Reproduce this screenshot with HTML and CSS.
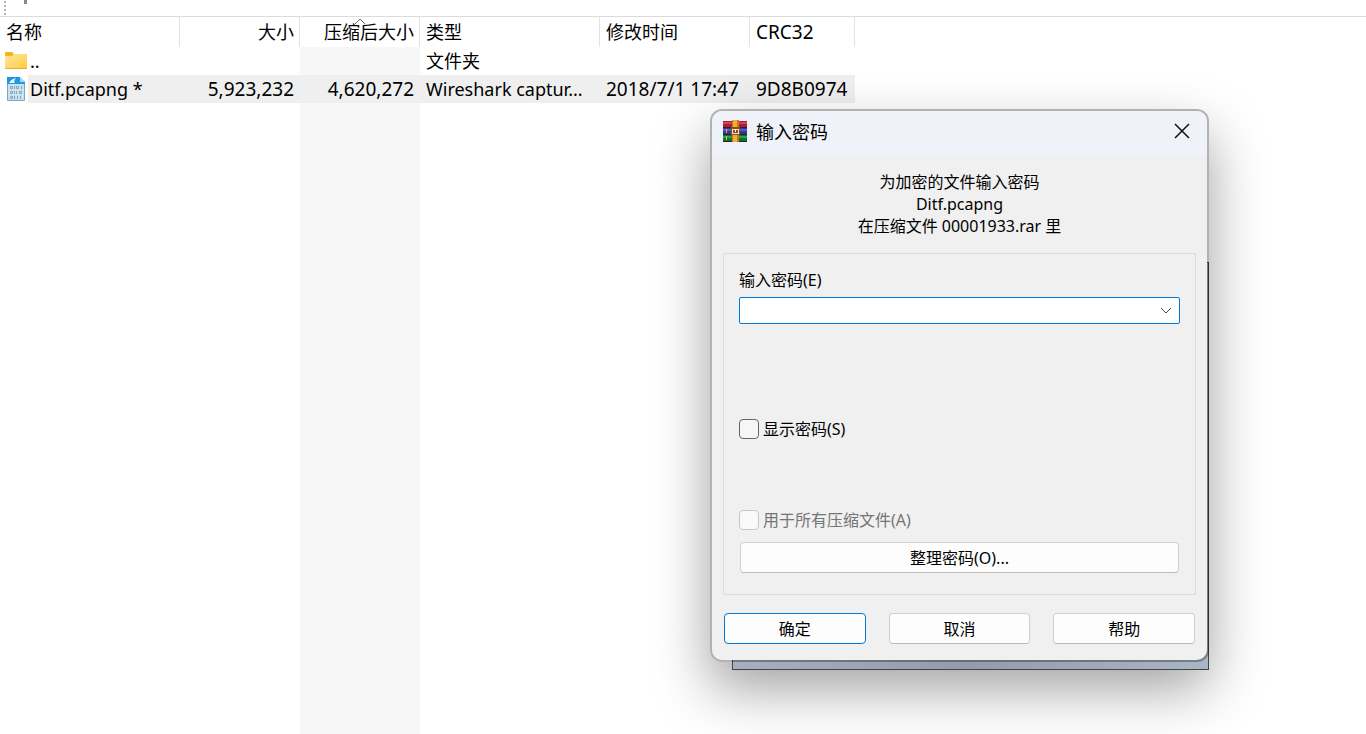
FILE: index.html
```
<!DOCTYPE html>
<html lang="zh-CN">
<head>
  <meta charset="UTF-8" />
  <title>00001933.rar</title>
  <link rel="stylesheet" href="styles.css">
</head>
<body>

  <div class="toolbar">
    <span class="grip"></span>
    <span class="handle"></span>
  </div>

  <table class="files">
    <colgroup>
      <col class="col-name">
      <col class="col-size">
      <col class="col-packed">
      <col class="col-type">
      <col class="col-time">
      <col class="col-crc">
    </colgroup>
    <thead>
      <tr>
        <th>名称</th>
        <th class="num">大小</th>
        <th class="num sorted">压缩后大小
          <svg class="sort" width="12" height="7" viewBox="0 0 12 7"><path d="M1 6 L6 1 L11 6" fill="none" stroke="#666" /></svg>
        </th>
        <th>类型</th>
        <th>修改时间</th>
        <th class="data">CRC32</th>
      </tr>
    </thead>
    <tbody>
      <tr>
        <td class="name">
          <div class="entry">
            <svg class="icon" width="24" height="24" viewBox="0 0 24 24">
              <defs>
                <linearGradient id="folder" x1="0" y1="0" x2="1" y2="1">
                  <stop offset="0" stop-color="#ffe7a2" />
                  <stop offset="1" stop-color="#ffcb3d" />
                </linearGradient>
              </defs>
              <path d="M1 4 Q1 3 2 3 H8 L10 5 H22 Q23 5 23 6 V12 H1 Z" fill="#f5b514" />
              <path d="M1 7 H8 L10 5 H22 Q23 5 23 6 V19 Q23 20 22 20 H2 Q1 20 1 19 Z" fill="url(#folder)" />
              <path d="M1 19.500 H23" stroke="#e9ae2c" />
            </svg>
            <span class="label">..</span>
          </div>
        </td>
        <td></td>
        <td></td>
        <td>文件夹</td>
        <td></td>
        <td></td>
      </tr>
      <tr class="selected">
        <td class="name">
          <div class="entry">
            <svg class="icon" width="24" height="24" viewBox="0 0 24 24">
              <path d="M3.500 0.500 H16 L20.500 5 V23.500 H3.500 Z" fill="#c9e2ef" stroke="#7aa9bf" />
              <path d="M3 0 H16 V5 H21 V7 H3 Z" fill="#1f97dc" />
              <path d="M5 6 Q7 2 12 1 Q9 4 11 6 Z" fill="#e9f7ff" />
              <path d="M16 0 L21 5 H16 Z" fill="#a5d8f2" />
              <g fill="none" stroke="#86a5b6">
                <path d="M6.500 9.500 h2 v2 h-2 z M10.500 9 v3 M12.500 9.500 h2 v2 h-2 z M17.500 9 v3" />
                <path d="M6.500 14.500 h2 v2 h-2 z M10.500 14 v3 M12.500 14 v3 M15.500 14.500 h2 v2 h-2 z" />
                <path d="M6.500 19.500 h2 v2 h-2 z M10.500 19 v3 M13.500 19 v3 M16.500 19 v3" />
              </g>
            </svg>
            <span class="label">Ditf.pcapng *</span>
          </div>
        </td>
        <td class="num data">5,923,232</td>
        <td class="num data">4,620,272</td>
        <td>Wireshark captur...</td>
        <td class="data">2018/7/1 17:47</td>
        <td class="data">9D8B0974</td>
      </tr>
      <tr class="rest">
        <td></td>
        <td></td>
        <td></td>
        <td></td>
        <td></td>
        <td></td>
      </tr>
    </tbody>
  </table>

  <div class="overlay">
    <div class="behind"></div>
    <form class="dialog" role="dialog" aria-labelledby="title">
      <div class="titlebar">
        <svg width="24" height="22" viewBox="0 0 24 22">
          <!-- three books -->
          <rect x="0" y="1" width="24" height="6" fill="#a81c3c" />
          <rect x="0" y="2" width="24" height="2" fill="#d8405c" />
          <rect x="0" y="8" width="24" height="6" fill="#33339c" />
          <rect x="0" y="9" width="24" height="2" fill="#5b5bd0" />
          <rect x="0" y="15" width="24" height="6" fill="#0b7430" />
          <rect x="0" y="16" width="24" height="2" fill="#22a650" />
          <path d="M0 7.500 H24 M0 14.500 H24 M0 21.500 H24" stroke="#351a2a" />
          <path d="M3.500 9 V13 M3.500 16 V20" stroke="#edb33c" />
          <!-- belt and buckle -->
          <rect x="9" y="0" width="7" height="22" fill="#c47a18" />
          <rect x="10" y="0" width="4" height="22" fill="#f0ac3c" />
          <rect x="8" y="7" width="9" height="8" fill="#8f4c10" />
          <rect x="9.500" y="9.500" width="6" height="4" fill="none" stroke="#eee6d5" />
          <path d="M12.500 9 V12" stroke="#fff" />
        </svg>
        <h1 id="title">输入密码</h1>
        <button type="button" class="close" aria-label="关闭">
          <svg width="16" height="16" viewBox="0 0 16 16"><path d="M1 1 L15 15 M15 1 L1 15" fill="none" stroke="#111" stroke-width="1.500" /></svg>
        </button>
      </div>

      <div class="content">
        <p class="message">为加密的文件输入密码<br>Ditf.pcapng<br>在压缩文件 00001933.rar 里</p>

        <div class="group">
          <label for="password">输入密码(E)</label>
          <div class="combo">
            <input type="text" id="password" />
            <button type="button" aria-label="展开">
              <svg width="12" height="8" viewBox="0 0 12 8"><path d="M1 1 L6 6 L11 1" fill="none" stroke="#444" /></svg>
            </button>
          </div>

          <label class="check show"><input type="checkbox" />显示密码(S)</label>
          <label class="check all"><input type="checkbox" disabled />用于所有压缩文件(A)</label>
          <button type="button" class="btn organize">整理密码(O)...</button>
        </div>

        <div class="actions">
          <button type="submit" class="btn default">确定</button>
          <button type="button" class="btn">取消</button>
          <button type="button" class="btn">帮助</button>
        </div>
      </div>
    </form>
  </div>

</body>
</html>
```
FILE: styles.css
```
* {
  box-sizing: border-box;
}

body {
  margin: 0;
  height: 100vh;
  overflow: hidden;
  display: flex;
  flex-direction: column;
  background: #fff;
  color: #000;
  font-family: "Noto Sans", "Noto Sans CJK SC", sans-serif;
  font-size: 18px;
}

button, input {
  font: inherit;
  color: inherit;
}

.toolbar {
  display: flex;
  align-items: flex-start;
  gap: 18px;
  height: 17px;
  flex: none;
  padding-left: 4px;
  border-bottom: 1px solid #dcdcdc;
}

.grip {
  width: 2px;
  height: 16px;
  background: repeating-linear-gradient(#fff 0 1px, #b4b4b4 1px 3px, #fff 3px 4px);
}

.handle {
  width: 3px;
  height: 4px;
  background: #888;
}

/* File list */
.files {
  flex: 1;
  display: table;
  width: 855px;
  height: calc(100vh - 17px);
  table-layout: fixed;
  border-collapse: collapse;
  line-height: 28px;
  white-space: nowrap;
}

.col-name { width: 180px; }
.col-size { width: 120px; }
.col-packed { width: 120px; background: #f7f7f7; }
.col-type { width: 180px; }
.col-time { width: 150px; }
.col-crc { width: 105px; }

.files th {
  height: 30px;
  padding: 0 6px;
  background: #fff linear-gradient(#e2e2e2, #e2e2e2) right / 1px 100% no-repeat;
  font-weight: normal;
  text-align: left;
}

.files td {
  height: 28px;
  padding: 0 6px;
}

.files .num {
  text-align: right;
}

.files .data {
  font-size: 19px;
}

.sorted {
  position: relative;
}

.sort {
  position: absolute;
  top: 1px;
  left: 54px;
}

.files .name {
  padding: 0 0 0 4px;
}

.entry {
  display: flex;
  align-items: center;
}

.icon {
  flex: none;
}

.label {
  flex: 1;
  padding-left: 2px;
}

.selected td {
  background: #efefef;
}

.files .selected .name {
  background: none;
}

.selected .label {
  background: #efefef;
}

.files .rest td {
  height: auto;
}

/* Password dialog */
.overlay {
  position: absolute;
  top: 109px;
  left: 710px;
  width: 499px;
  border-radius: 12px;
  box-shadow: 0 26px 56px rgba(0, 0, 0, 0.38);
  font-size: 16px;
}

.behind {
  position: absolute;
  top: 153px;
  right: 0;
  bottom: -8px;
  left: 22px;
  border: 1px solid #444;
  background: linear-gradient(90deg, #a5b1be, #929dab 50%, #a9b6c4);
}

.dialog {
  position: relative;
  border: 2px solid rgba(0, 0, 0, 0.3);
  border-radius: 12px;
  background: #f0f0f0;
  background-clip: padding-box;
}

.titlebar {
  display: flex;
  align-items: center;
  gap: 9px;
  height: 43px;
  padding: 0 9px 3px 11px;
  border-radius: 10px 10px 0 0;
  background: #f0f2f9;
}

.titlebar h1 {
  flex: 1;
  margin: 0;
  font-size: 18px;
  font-weight: normal;
}

.close {
  display: flex;
  padding: 8px;
  border: none;
  background: none;
}

.content {
  padding: 17px 11px 16px;
}

.message {
  margin: 0 0 16px;
  line-height: 22px;
  text-align: center;
}

.group {
  display: flex;
  flex-direction: column;
  padding: 14px 15px 21px;
  border: 1px solid #dcdcdc;
  line-height: 24px;
}

.combo {
  display: flex;
  height: 27px;
  margin-top: 5px;
  border: 1px solid #0078d4;
  border-radius: 2px;
  background: #fff;
}

.combo input {
  flex: 1;
  min-width: 0;
  padding: 0 4px;
  border: none;
  outline: none;
  background: none;
}

.combo button {
  display: flex;
  align-items: center;
  padding: 0 7px;
  border: none;
  background: none;
}

.check {
  display: flex;
  align-items: center;
  gap: 4px;
}

.check input {
  appearance: none;
  width: 20px;
  height: 20px;
  margin: 0;
  border: 1px solid #666;
  border-radius: 4px;
  background: #f6f6f6;
}

.show {
  margin-top: 93px;
}

.all {
  margin: 67px 0 10px;
  color: #757575;
}

.all input {
  border-color: #c8c8c8;
  background: #f9f9f9;
}

.btn {
  height: 31px;
  padding: 0;
  border: 1px solid #d0d0d0;
  border-bottom-color: #bbb;
  border-radius: 4px;
  background: #fdfdfd;
  line-height: 28px;
}

.organize {
  margin: 0 1px;
}

.default {
  border-color: #0078d4;
}

.actions {
  display: grid;
  grid-template-columns: repeat(3, 1fr);
  gap: 23px;
  margin-top: 18px;
  padding: 0 1px;
}
```
